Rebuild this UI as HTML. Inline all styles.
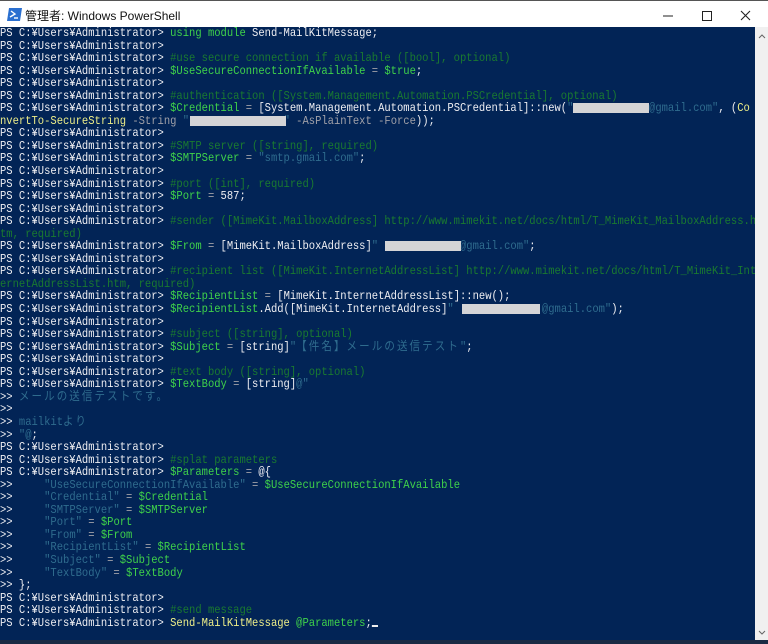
<!DOCTYPE html>
<html><head><meta charset="utf-8"><style>
*{margin:0;padding:0;box-sizing:border-box}
body{width:768px;height:644px;overflow:hidden;background:#fff;position:relative;font-family:"Liberation Sans","Noto Sans CJK JP",sans-serif}
#title{position:absolute;left:0;top:0;width:768px;height:27px;background:#fff;border-top:1px solid #555}
#title .t{position:absolute;left:25px;top:6px;font-size:12px;color:#111}
#con{position:absolute;left:0;top:27px;width:755px;height:614px;background:#022456;overflow:hidden}
#sb{position:absolute;left:755px;top:27px;width:13px;height:614px;background:#f0f0f0}
#bot{position:absolute;left:0;top:640px;width:768px;height:4px;background:#1a2a44}
pre{position:absolute;left:0;top:0;font-family:"Liberation Mono","Noto Sans CJK JP",monospace;font-size:12px;line-height:12.553px;color:#eeeef2;transform:scaleX(0.875);transform-origin:0 0;white-space:pre}
.g{color:#3fd24a}.c{color:#1a7a30}.s{color:#2f6c8e}.y{color:#eeee88}.o{color:#a0a0a8}
.j{letter-spacing:2.4px}
.r{position:absolute;background:#d4d4d6;height:10px}
</style></head><body>
<div id="title">
<svg style="position:absolute;left:7px;top:7px" width="15" height="13" viewBox="0 0 15 13"><path d="M2 0H15L13 13H0Z" fill="#2a6fd0"/><path d="M4 3l4 3-5 3" stroke="#fff" stroke-width="1.4" fill="none"/><path d="M7 10h4" stroke="#fff" stroke-width="1.4"/></svg>
<span class="t">管理者: Windows PowerShell</span>
<svg style="position:absolute;left:660px;top:8px" width="100" height="14" viewBox="0 0 100 14"><path d="M3 7h10" stroke="#222" stroke-width="1"/><rect x="42.5" y="2.5" width="9" height="9" fill="none" stroke="#222"/><path d="M81 2l9 9M90 2l-9 9" stroke="#222" stroke-width="1.1"/></svg>
</div>
<div id="con"><pre>PS C:¥Users¥Administrator&gt; <span class="g">using module</span> Send-MailKitMessage;
PS C:¥Users¥Administrator&gt;
PS C:¥Users¥Administrator&gt; <span class="c">#use secure connection if available ([bool], optional)</span>
PS C:¥Users¥Administrator&gt; <span class="g">$UseSecureConnectionIfAvailable</span> <span class="o">=</span> <span class="g">$true</span>;
PS C:¥Users¥Administrator&gt;
PS C:¥Users¥Administrator&gt; <span class="c">#authentication ([System.Management.Automation.PSCredential], optional)</span>
PS C:¥Users¥Administrator&gt; <span class="g">$Credential</span> <span class="o">=</span> [System.Management.Automation.PSCredential]::new(<span class="s">"            @gmail.com"</span>, (<span class="y">Co</span>
<span class="y">nvertTo-SecureString</span> <span class="o">-String</span> <span class="s">"               "</span> <span class="o">-AsPlainText -Force</span>));
PS C:¥Users¥Administrator&gt;
PS C:¥Users¥Administrator&gt; <span class="c">#SMTP server ([string], required)</span>
PS C:¥Users¥Administrator&gt; <span class="g">$SMTPServer</span> <span class="o">=</span> <span class="s">"smtp.gmail.com"</span>;
PS C:¥Users¥Administrator&gt;
PS C:¥Users¥Administrator&gt; <span class="c">#port ([int], required)</span>
PS C:¥Users¥Administrator&gt; <span class="g">$Port</span> <span class="o">=</span> 587;
PS C:¥Users¥Administrator&gt;
PS C:¥Users¥Administrator&gt; <span class="c">#sender ([MimeKit.MailboxAddress] http://www.mimekit.net/docs/html/T_MimeKit_MailboxAddress.h</span>
<span class="c">tm, required)</span>
PS C:¥Users¥Administrator&gt; <span class="g">$From</span> <span class="o">=</span> [MimeKit.MailboxAddress]<span class="s">"             @gmail.com"</span>;
PS C:¥Users¥Administrator&gt;
PS C:¥Users¥Administrator&gt; <span class="c">#recipient list ([MimeKit.InternetAddressList] http://www.mimekit.net/docs/html/T_MimeKit_Int</span>
<span class="c">ernetAddressList.htm, required)</span>
PS C:¥Users¥Administrator&gt; <span class="g">$RecipientList</span> <span class="o">=</span> [MimeKit.InternetAddressList]::new();
PS C:¥Users¥Administrator&gt; <span class="g">$RecipientList</span>.Add([MimeKit.InternetAddress]<span class="s">"              @gmail.com"</span>);
PS C:¥Users¥Administrator&gt;
PS C:¥Users¥Administrator&gt; <span class="c">#subject ([string], optional)</span>
PS C:¥Users¥Administrator&gt; <span class="g">$Subject</span> <span class="o">=</span> [string]<span class="s">"<span class="j">【件名】メールの送信テスト</span>"</span>;
PS C:¥Users¥Administrator&gt;
PS C:¥Users¥Administrator&gt; <span class="c">#text body ([string], optional)</span>
PS C:¥Users¥Administrator&gt; <span class="g">$TextBody</span> <span class="o">=</span> [string]<span class="s">@"</span>
&gt;&gt; <span class="s j">メールの送信テストです。</span>
&gt;&gt;
&gt;&gt; <span class="s">mailkit<span class="j">より</span></span>
&gt;&gt; <span class="s">"@</span>;
PS C:¥Users¥Administrator&gt;
PS C:¥Users¥Administrator&gt; <span class="c">#splat parameters</span>
PS C:¥Users¥Administrator&gt; <span class="g">$Parameters</span> <span class="o">=</span> @{
&gt;&gt;     <span class="s">"UseSecureConnectionIfAvailable"</span> <span class="o">=</span> <span class="g">$UseSecureConnectionIfAvailable</span>
&gt;&gt;     <span class="s">"Credential"</span> <span class="o">=</span> <span class="g">$Credential</span>
&gt;&gt;     <span class="s">"SMTPServer"</span> <span class="o">=</span> <span class="g">$SMTPServer</span>
&gt;&gt;     <span class="s">"Port"</span> <span class="o">=</span> <span class="g">$Port</span>
&gt;&gt;     <span class="s">"From"</span> <span class="o">=</span> <span class="g">$From</span>
&gt;&gt;     <span class="s">"RecipientList"</span> <span class="o">=</span> <span class="g">$RecipientList</span>
&gt;&gt;     <span class="s">"Subject"</span> <span class="o">=</span> <span class="g">$Subject</span>
&gt;&gt;     <span class="s">"TextBody"</span> <span class="o">=</span> <span class="g">$TextBody</span>
&gt;&gt; };
PS C:¥Users¥Administrator&gt;
PS C:¥Users¥Administrator&gt; <span class="c">#send message</span>
PS C:¥Users¥Administrator&gt; <span class="y">Send-MailKitMessage</span> <span class="g">@Parameters</span>;<span style="display:inline-block;width:7px;height:2px;background:#eee;vertical-align:-1px"></span></pre>
<div class="r" style="left:573px;top:76px;width:76px"></div>
<div class="r" style="left:190px;top:89px;width:96px"></div>
<div class="r" style="left:385px;top:214px;width:76px"></div>
<div class="r" style="left:462px;top:277px;width:78px"></div>
</div>
<div id="sb"><svg style="position:absolute;left:3px;top:7px" width="8" height="5"><path d="M1 4l3-3 3 3" stroke="#666" fill="none"/></svg><svg style="position:absolute;left:3px;top:603px" width="8" height="5"><path d="M1 1l3 3 3-3" stroke="#666" fill="none"/></svg></div>
<div id="bot"></div>
</body></html>
